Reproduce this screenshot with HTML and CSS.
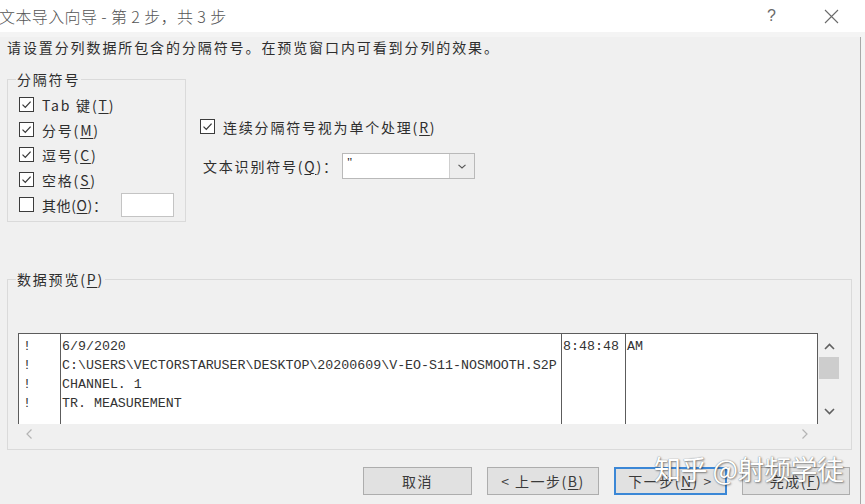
FILE: index.html
```html
<!DOCTYPE html>
<html lang="zh-CN">
<head>
  <meta charset="UTF-8">
  <title>文本导入向导</title>
  <link rel="stylesheet" href="styles.css">
</head>
<body>
  <div class="window">
    <div class="titlebar">
      <span class="title">文本导入向导 - 第 2 步，共 3 步</span>
      <span class="help">?</span>
      <svg class="close" width="15" height="15" viewBox="0 0 15 15"><path d="M1 1L14 14M14 1L1 14" stroke="#6a6a6a" stroke-width="1.1" fill="none"/></svg>
    </div>

    <div class="dialog">
      <p class="intro">请设置分列数据所包含的分隔符号。在预览窗口内可看到分列的效果。</p>

      <div class="top">
        <div class="group sep">
          <div class="group-title">分隔符号</div>
          <div class="rows">
            <div class="row">
              <span class="cb"><svg width="13" height="13" viewBox="0 0 13 13"><path d="M2.5 6.6l2.8 2.8L10.6 3.6" fill="none" stroke="#3a3a3a" stroke-width="1.3"/></svg></span>
              <span>Tab 键(<u>T</u>)</span>
            </div>
            <div class="row">
              <span class="cb"><svg width="13" height="13" viewBox="0 0 13 13"><path d="M2.5 6.6l2.8 2.8L10.6 3.6" fill="none" stroke="#3a3a3a" stroke-width="1.3"/></svg></span>
              <span>分号(<u>M</u>)</span>
            </div>
            <div class="row">
              <span class="cb"><svg width="13" height="13" viewBox="0 0 13 13"><path d="M2.5 6.6l2.8 2.8L10.6 3.6" fill="none" stroke="#3a3a3a" stroke-width="1.3"/></svg></span>
              <span>逗号(<u>C</u>)</span>
            </div>
            <div class="row">
              <span class="cb"><svg width="13" height="13" viewBox="0 0 13 13"><path d="M2.5 6.6l2.8 2.8L10.6 3.6" fill="none" stroke="#3a3a3a" stroke-width="1.3"/></svg></span>
              <span>空格(<u>S</u>)</span>
            </div>
            <div class="row">
              <span class="cb"></span>
              <span class="other">其他(<u>O</u>)：</span>
              <span class="field"></span>
            </div>
          </div>
        </div>

        <div class="options">
          <div class="opt-row">
            <span class="cb"><svg width="13" height="13" viewBox="0 0 13 13"><path d="M2.5 6.6l2.8 2.8L10.6 3.6" fill="none" stroke="#3a3a3a" stroke-width="1.3"/></svg></span>
            <span>连续分隔符号视为单个处理(<u>R</u>)</span>
          </div>
          <div class="qual-row">
            <span class="qual-label">文本识别符号(<u>Q</u>)：</span>
            <div class="combo">
              <span class="combo-value">"</span>
              <span class="combo-btn"><svg width="8" height="5" viewBox="0 0 8 5"><path d="M0.5 0.8L4 4L7.5 0.8" fill="none" stroke="#555" stroke-width="1.1"/></svg></span>
            </div>
          </div>
        </div>
      </div>

      <div class="group preview">
        <div class="group-title">数据预览(<u>P</u>)</div>
        <div class="grid-wrap">
          <div class="grid">
            <div class="col c1">!
!
!
!</div>
            <div class="col c2">6/9/2020
C:\USERS\VECTORSTARUSER\DESKTOP\20200609\V-EO-S11-NOSMOOTH.S2P
CHANNEL. 1
TR. MEASUREMENT</div>
            <div class="col c3">8:48:48</div>
            <div class="col c4">AM</div>
          </div>
          <div class="vscroll">
            <svg class="arrow-up" width="11" height="7" viewBox="0 0 11 7"><path d="M1 6L5.5 1.5L10 6" fill="none" stroke="#606060" stroke-width="1.6"/></svg>
            <span class="thumb"></span>
            <svg class="arrow-down" width="11" height="7" viewBox="0 0 11 7"><path d="M1 1L5.5 5.5L10 1" fill="none" stroke="#606060" stroke-width="1.6"/></svg>
          </div>
        </div>
        <div class="hscroll">
          <svg width="6" height="10" viewBox="0 0 6 10"><path d="M5.5 0.5L1 5L5.5 9.5" fill="none" stroke="#b4b4b4" stroke-width="1.2"/></svg>
          <svg width="6" height="10" viewBox="0 0 6 10"><path d="M0.5 0.5L5 5L0.5 9.5" fill="none" stroke="#b4b4b4" stroke-width="1.2"/></svg>
        </div>
      </div>

      <div class="buttons">
        <div class="btn w-cancel">取消</div>
        <div class="btn w-prev">&lt; 上一步(<u>B</u>)</div>
        <div class="btn w-next default">下一步(<u>N</u>) &gt;</div>
        <div class="btn w-finish">完成(<u>F</u>)</div>
      </div>
    </div>

    <!-- bits of the document behind the dialog -->
    <div class="under">
      <span style="width: 40px"></span>
      <span style="width: 92px; margin-left: 55px"></span>
      <span style="width: 58px; margin-left: 25px"></span>
      <span style="width: 50px; margin-left: 20px"></span>
      <span style="width: 60px; margin-left: 22px"></span>
    </div>

    <div class="watermark">知乎 @射频学徒</div>
  </div>
</body>
</html>
```

FILE: styles.css
```css
body {
  margin: 0;
  width: 865px;
  height: 504px;
  overflow: hidden;
  font-family: "Noto Sans CJK SC", sans-serif;
  font-size: 14px;
  color: #2e2e2e;
  background-color: #f4f4f4;
}

u {
  text-decoration-thickness: 1px;
  text-underline-offset: 2px;
}

.window {
  position: relative;
  height: 504px;
}

.titlebar {
  height: 32px;
  background-color: #fff;
  display: flex;
  align-items: center;
}

.title {
  flex: 1;
  margin-left: -1px;
  font-size: 16px;
  font-weight: 300;
  color: #555;
  letter-spacing: 0.4px;
  line-height: 20px;
}

.help {
  font-family: "Liberation Sans", sans-serif;
  font-size: 16px;
  color: #6a6a6a;
  margin-right: 48px;
}

.close {
  margin-right: 26px;
}

.dialog {
  width: 861px;
  height: 468px;
  box-sizing: border-box;
  padding-left: 7px;
  background-color: #f0f0f0;
  border-right: 1px solid #a8a8a8;
}

.intro {
  margin: 5px 0 0;
  line-height: 20px;
  letter-spacing: 1.9px;
}

.top {
  display: flex;
  align-items: flex-start;
  margin-top: 22px;
}

.group {
  border: 1px solid #dadada;
  box-sizing: border-box;
}

.group-title {
  width: max-content;
  margin: -10px 0 0 8px;
  padding: 0 1px;
  line-height: 18px;
  letter-spacing: 1.8px;
  background-color: #f0f0f0;
}

.sep {
  width: 179px;
  height: 143px;
}

.rows {
  margin-top: 4px;
}

.row {
  display: flex;
  align-items: center;
  gap: 8px;
  height: 25px;
  padding-left: 11px;
  letter-spacing: 1.8px;
  white-space: nowrap;
}

.other {
  letter-spacing: 0.6px;
}

.cb {
  width: 15px;
  height: 15px;
  flex: none;
  box-sizing: border-box;
  border: 1px solid #3c3c3c;
  background-color: #fff;
  display: flex;
}

.field {
  width: 53px;
  height: 24px;
  flex: none;
  margin-left: auto;
  margin-right: 11px;
  box-sizing: border-box;
  border: 1px solid #c4c4c4;
  background-color: #fff;
}

.options {
  margin-left: 14px;
  padding-top: 35px;
}

.opt-row {
  display: flex;
  align-items: center;
  gap: 8px;
  height: 25px;
  letter-spacing: 1.8px;
}

.qual-row {
  display: flex;
  align-items: center;
  height: 26px;
  margin-top: 14px;
  padding-left: 3px;
}

.qual-label {
  width: 139px;
  letter-spacing: 1.8px;
}

.combo {
  width: 133px;
  height: 26px;
  box-sizing: border-box;
  border: 1px solid #b9b9b9;
  background-color: #fff;
  display: flex;
}

.combo-value {
  flex: 1;
  padding-left: 4px;
  line-height: 16px;
  font-family: "Liberation Serif", serif;
  font-size: 13px;
  color: #222;
}

.combo-btn {
  width: 24px;
  border-left: 1px solid #cfcfcf;
  background-color: #ededed;
  display: flex;
  align-items: center;
  justify-content: center;
}

.preview {
  width: 845px;
  height: 171px;
  margin-top: 57px;
}

.grid-wrap {
  display: flex;
  height: 91px;
  margin: 45px 0 0 10px;
}

.grid {
  width: 800px;
  display: flex;
  box-sizing: border-box;
  border: 1px solid #5c5c5c;
  border-bottom: none;
  background-color: #fff;
  font-family: "Liberation Mono", monospace;
  font-size: 13.3px;
  color: #333;
}

.col {
  box-sizing: border-box;
  padding-top: 3px;
  line-height: 19px;
  white-space: pre;
  overflow: hidden;
}

.c1 {
  width: 41px;
  padding-left: 4px;
}

.c2 {
  width: 501px;
  padding-left: 1px;
  border-left: 1px solid #5c5c5c;
}

.c3 {
  width: 64px;
  padding-left: 1px;
  border-left: 1px solid #5c5c5c;
}

.c4 {
  flex: 1;
  padding-left: 1px;
  border-left: 1px solid #5c5c5c;
}

.vscroll {
  width: 22px;
  display: flex;
  flex-direction: column;
  align-items: center;
}

.arrow-up {
  margin-top: 10px;
}

.thumb {
  width: 20px;
  height: 22px;
  margin-top: 7px;
  background-color: #cdcdcd;
}

.arrow-down {
  margin-top: 29px;
}

.hscroll {
  width: 822px;
  height: 19px;
  margin-left: 10px;
  box-sizing: border-box;
  padding: 0 32px 0 8px;
  display: flex;
  align-items: center;
  justify-content: space-between;
}

.buttons {
  display: flex;
  justify-content: flex-end;
  gap: 15px;
  margin-top: 17px;
  padding-right: 10px;
}

.btn {
  height: 28px;
  box-sizing: border-box;
  border: 1px solid #adadad;
  background-color: #e1e1e1;
  display: flex;
  align-items: center;
  justify-content: center;
  letter-spacing: 1.5px;
  color: #3a3a3a;
}

.btn.default {
  border: 2px solid #3b87d6;
}

.w-cancel { width: 109px; }
.w-prev { width: 112px; }
.w-next { width: 113px; }
.w-finish { width: 108px; }

.under {
  height: 4px;
  display: flex;
  align-items: flex-end;
}

.under span {
  height: 2px;
  background-color: #333;
}

.watermark {
  position: absolute;
  left: 654px;
  top: 453px;
  font-size: 27px;
  line-height: 32px;
  letter-spacing: -0.5px;
  color: #fff;
  text-shadow: 0 0 1px #666, 1px 1px 2px rgba(0, 0, 0, 0.45);
}
```
